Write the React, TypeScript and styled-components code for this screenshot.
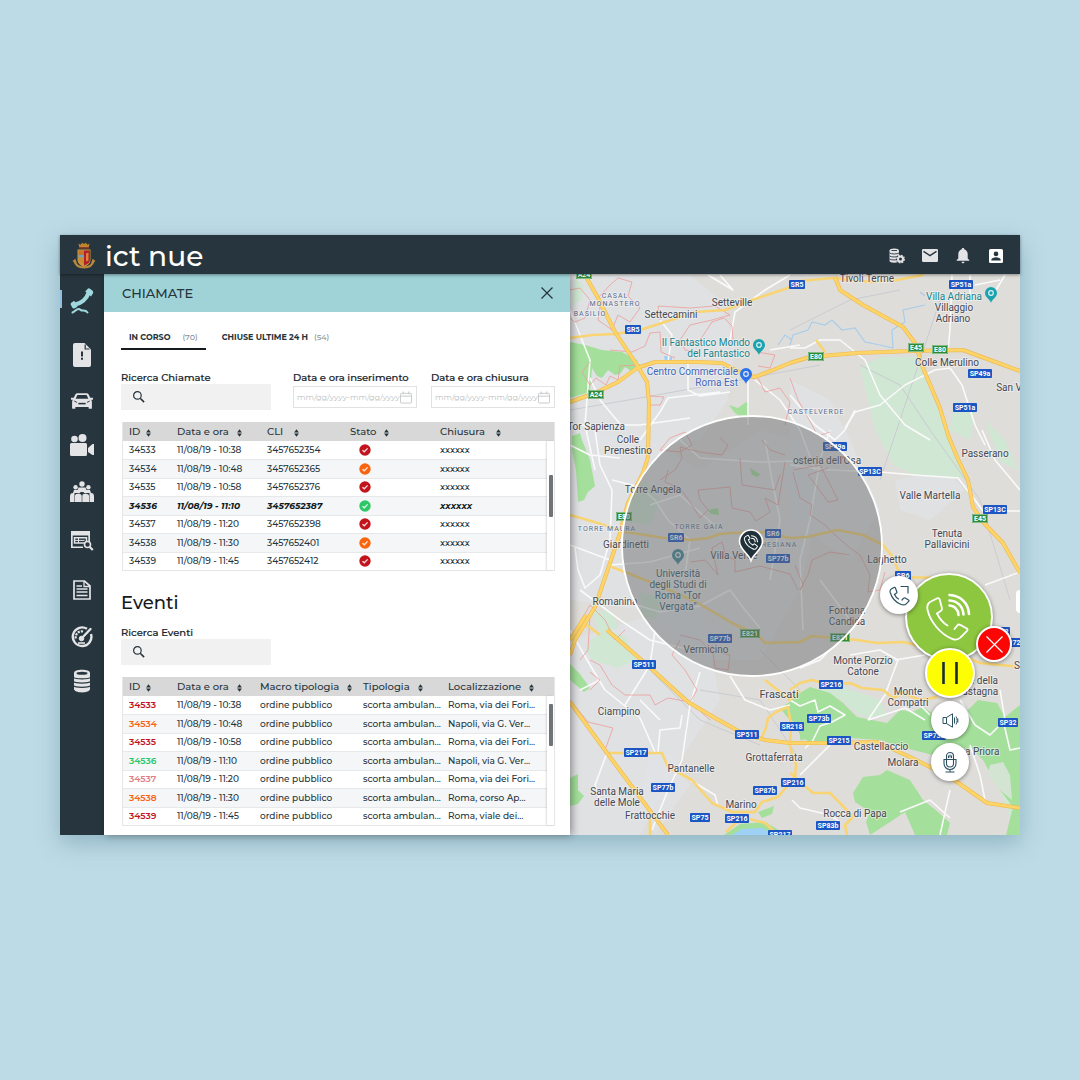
import React from "react";
import styled, { createGlobalStyle, css } from "styled-components";

const ink = "#26343b";
const pale = "#e4e3e6";
const sans = `Montserrat, Inter, "Open Sans", sans-serif`;

const GlobalStyle = createGlobalStyle`
  *, *::before, *::after { box-sizing: border-box; }
  body { margin: 0; background: #bddbe6; font-family: ${sans}; color: ${ink}; }
  button, input { font-family: inherit; color: inherit; }
  button { padding: 0; border: 0; background: none; cursor: pointer; }
`;

const Page = styled.main`
  min-height: 100vh;
  padding: 235px 60px 240px;
`;

const Window = styled.div`
  display: flex;
  flex-direction: column;
  background: #fff;
  box-shadow: 0 8px 22px rgba(60, 110, 130, 0.35);
`;

const TopBar = styled.header`
  display: flex;
  align-items: center;
  height: 39px;
  padding: 2px 8px 0 12px;
  background: #27363e;
  position: relative;
  z-index: 3;
  box-shadow: 0 1px 3px rgba(0, 0, 0, 0.4);
`;

const Brand = styled.h1`
  flex: 1;
  margin: 0 0 0 9px;
  font-size: 28px;
  line-height: 36px;
  font-weight: 500;
  color: #fff;
`;

const TopButton = styled.button`
  display: grid;
  place-items: center;
  width: 33px;
  height: 36px;
  color: ${pale};
`;

const Body = styled.div`
  display: flex;
`;

const SideNav = styled.nav`
  flex: 0 0 44px;
  display: flex;
  flex-direction: column;
  background: #27363e;
`;

const NavButton = styled.button<{ $h: number; $active?: boolean }>`
  display: grid;
  place-items: center;
  height: ${(p) => p.$h}px;
  color: ${(p) => (p.$active ? "#9fd8de" : pale)};
  position: relative;
  ${(p) =>
    p.$active &&
    css`
      &::before {
        content: "";
        position: absolute;
        left: 0;
        top: 16px;
        width: 2px;
        height: 18px;
        background: #8fc0e0;
      }
    `}
`;

const Panel = styled.section`
  flex: 0 0 466px;
  background: #fff;
  position: relative;
  z-index: 2;
  box-shadow: 2px 0 8px rgba(0, 0, 0, 0.4);
`;

const PanelHeader = styled.div`
  display: flex;
  align-items: center;
  justify-content: space-between;
  height: 38px;
  padding: 0 16px 0 18px;
  background: #9fd3d8;
`;

const PanelTitle = styled.h2`
  margin: 0;
  font-size: 13px;
  line-height: 20px;
  font-weight: 500;
`;

const CloseButton = styled.button`
  display: grid;
  place-items: center;
  width: 14px;
  height: 20px;
`;

const PanelBody = styled.div`
  padding: 16px 15px 9px 17px;
`;

const Tabs = styled.div`
  display: flex;
  gap: 8px;
`;

const Tab = styled.button<{ $active?: boolean; $gap: number }>`
  display: flex;
  align-items: center;
  gap: ${(p) => p.$gap}px;
  padding: 0 8px 2px;
  height: 22px;
  font-size: 8px;
  line-height: 16px;
  font-weight: 700;
  border-bottom: 2px solid ${(p) => (p.$active ? "#151b1e" : "transparent")};
`;

const TabCount = styled.span`
  font-weight: 500;
  color: #8b9093;
`;

const Filters = styled.div`
  display: flex;
  align-items: flex-end;
  justify-content: space-between;
  margin-top: 20px;
`;

const Field = styled.div<{ $w: number }>`
  display: flex;
  flex-direction: column;
  justify-content: flex-end;
  width: ${(p) => p.$w}px;
  height: 40px;
`;

const Label = styled.label`
  font-size: 10px;
  line-height: 12px;
  font-weight: 500;
  color: #17242a;
  -webkit-text-stroke: 0.2px #17242a;
  white-space: nowrap;
`;

const SearchBox = styled.div`
  display: flex;
  align-items: center;
  height: 26px;
  padding-left: 11px;
  background: #f1f1f1;
`;

const SearchInput = styled.input`
  flex: 1;
  min-width: 0;
  height: 26px;
  padding: 0 8px;
  border: 0;
  background: transparent;
  font-size: 10px;
`;

const DateBox = styled.div`
  display: flex;
  align-items: center;
  height: 22px;
  margin: 2px 0;
  padding: 0 4px 0 3px;
  border: 1px solid #e1e2e3;
  color: #bcbfc1;
`;

const DateInput = styled.input`
  flex: 1;
  min-width: 0;
  height: 18px;
  padding: 0;
  border: 0;
  background: transparent;
  font-size: 8px;
  font-weight: 400;
  &::placeholder {
    color: #bcbfc1;
    opacity: 1;
  }
`;

const TableFrame = styled.div`
  position: relative;
  margin-top: 12px;
  margin-left: 1px;
  border: 1px solid #e6e6e7;
  border-top: 0;
`;

const DataTable = styled.table`
  width: 100%;
  table-layout: fixed;
  border-collapse: collapse;
`;

const Th = styled.th<{ $w?: number }>`
  width: ${(p) => (p.$w ? `${p.$w}px` : "auto")};
  height: 19px;
  padding: 0 0 0 6px;
  text-align: left;
  background: #d8d8d8;
`;

const ThInner = styled.span<{ $gap: number }>`
  display: flex;
  align-items: center;
  gap: ${(p) => p.$gap}px;
  font-size: 10px;
  line-height: 18px;
  font-weight: 500;
  white-space: nowrap;
  svg {
    margin-top: 3px;
  }
`;

const Tr = styled.tr<{ $current?: boolean }>`
  height: 18px;
  &:nth-child(even) {
    height: 19px;
    background: #f4f6f8;
  }
  & + & {
    border-top: 1px solid #e6e8e9;
  }
  font-weight: ${(p) => (p.$current ? 700 : 500)};
  font-style: ${(p) => (p.$current ? "italic" : "normal")};
  color: ${(p) => (p.$current ? "#101b20" : ink)};
`;

const Td = styled.td<{ $color?: string }>`
  padding: 0 0 0 6px;
  font-size: 9px;
  line-height: 16px;
  color: ${(p) => p.$color || "inherit"};
  font-weight: ${(p) => (p.$color ? 600 : "inherit")};
  white-space: nowrap;
`;

const StatusDot = styled.span`
  display: block;
  height: 12px;
  padding-left: 9px;
  svg {
    display: block;
  }
`;

const ScrollTrack = styled.div`
  position: absolute;
  top: 19px;
  right: 0;
  bottom: 0;
  width: 7px;
  background: #fff;
  box-shadow: -1px 0 2px rgba(0, 0, 0, 0.14);
`;

const ScrollThumb = styled.div<{ $top: number }>`
  width: 4px;
  height: 42px;
  margin: ${(p) => p.$top}px 0 0 2px;
  border-radius: 1px;
  background: #717476;
`;

const SectionTitle = styled.h2`
  margin: 20px 0 10px;
  font-size: 18px;
  line-height: 24px;
  font-weight: 500;
  color: #15191b;
`;

const MapArea = styled.section`
  flex: 1;
  min-width: 0;
  position: relative;
  overflow: hidden;
  background: #dfddd9;
`;

const MapDrawing = styled.svg`
  position: absolute;
  inset: 0;
  width: 100%;
  height: 100%;
`;

const CallButton = styled.button<{ $right: number; $top: number; $size: number; $bg: string }>`
  position: absolute;
  right: ${(p) => p.$right}px;
  top: ${(p) => p.$top}px;
  width: ${(p) => p.$size}px;
  height: ${(p) => p.$size}px;
  display: grid;
  place-items: center;
  border-radius: 50%;
  border: 2px solid #fff;
  background: ${(p) => p.$bg};
  box-shadow: 0 1px 4px rgba(0, 0, 0, 0.45);
  color: #2c5262;
`;

/* ---------- icons ---------- */

const Crest = () => (
  <svg width="24" height="30" viewBox="0 0 24 30" aria-hidden="true">
    <path d="M6.500 2.500l2 1.200 1.700-2 1.800 1.300 1.800-1.300 1.700 2 2-1.200-.8 4H7.300z" fill="#c0842f" />
    <path d="M7 6h10v1.600H7z" fill="#8a3b2b" />
    <path d="M5.500 8.500h13v10c0 4-3 6-6.500 7.500-3.500-1.500-6.500-3.500-6.500-7.500z" fill="#c9963f" />
    <path d="M6.500 9.500H12v5H6.500z" fill="#c8742f" />
    <path d="M6.500 14H12v2.500H6.500z" fill="#6aa3c4" />
    <path d="M6.500 16.500H12v7c-3-1.200-5.500-2.800-5.500-5.500z" fill="#c98b35" />
    <path d="M12 9.500h6v9c0 3-2.500 4.800-6 6z" fill="#b3202a" />
    <path d="M14 12.500l2.500-1v8l-2.500 1z" fill="#d9833f" />
    <path d="M2.500 20c1 4 4 6.500 9.500 6.500s8.500-2.500 9.500-6.500" fill="none" stroke="#b9893c" strokeWidth="2.200" />
    <path d="M1 20.500l2-1.500 1 3M23 20.500L21 19l-1 3" fill="none" stroke="#b9893c" strokeWidth="1.500" />
  </svg>
);

const HandsetIcon = () => (
  <svg width="24" height="26" viewBox="0 0 24 26" aria-hidden="true">
    <path d="M5 16.500C11 15.500 16.500 11 18.500 5" fill="none" stroke="currentColor" strokeWidth="4.200" />
    <path d="M15.200 3.500l2.300-2.600c.8-.9 2-.7 2.800 0l2 1.700c1 .8 1.200 2 .6 3L21 8.500z" fill="currentColor" />
    <path d="M7.500 18.800L4.800 20.300c-1 .6-2 .3-2.600-.7L1 17.300c-.6-1-.4-2.200.6-2.900l2.700-1.600z" fill="currentColor" />
    <path d="M2.500 24.500C5 23.300 7 20.300 9 21s1.500 1.700 4 1.500 3.500.5 4.500 2" fill="none" stroke="currentColor" strokeWidth="2" strokeLinecap="round" />
  </svg>
);

const AlertDocIcon = () => (
  <svg width="18" height="24" viewBox="0 0 18 24" aria-hidden="true">
    <path d="M2 0h9.500L18 6.500V22a2 2 0 0 1-2 2H2a2 2 0 0 1-2-2V2a2 2 0 0 1 2-2z" fill="currentColor" />
    <path d="M12.200 1.500V6h4.300" fill="none" stroke="#27363e" strokeWidth="1.200" />
    <path d="M8 8.500h2v5H8zM8 14.800h2v2H8z" fill="#27363e" />
  </svg>
);

const CarIcon = () => (
  <svg width="22" height="16" viewBox="0 0 24 17" aria-hidden="true">
    <path d="M0 5h3l2-4.200C5.300.3 6 0 7 0h10c1 0 1.700.3 2 .8L21 5h3v2h-2c.6.8.8 1.500.8 2.500V16a1 1 0 0 1-1 1h-1.600a1 1 0 0 1-1-1v-1H4.800v1a1 1 0 0 1-1 1H2.200a1 1 0 0 1-1-1V9.500C1.200 8.500 1.500 7.800 2 7H0z" fill="currentColor" />
    <path d="M5 6l2-4h10l2 4z" fill="#27363e" />
    <path d="M8 10.500h8v1.700H8z" fill="#27363e" />
    <path d="M3.500 8.500l3 1.500M20.500 8.500l-3 1.500" stroke="#27363e" strokeWidth="1" />
  </svg>
);

const CameraIcon = () => (
  <svg width="24" height="23" viewBox="0 0 24 23" fill="currentColor" aria-hidden="true">
    <circle cx="4.500" cy="5" r="3.300" />
    <circle cx="12.500" cy="4" r="4" />
    <path d="M1.500 9h14A1.500 1.500 0 0 1 17 10.500v10a1.500 1.500 0 0 1-1.500 1.500h-14A1.500 1.500 0 0 1 0 20.500v-10A1.500 1.500 0 0 1 1.500 9zM18 14l4.500-4H24v11h-1.500L18 18z" />
  </svg>
);

const CrowdIcon = () => (
  <svg width="24" height="22" viewBox="0 0 24 22" fill="currentColor" aria-hidden="true">
    <circle cx="12" cy="3" r="2.700" />
    <circle cx="5.600" cy="6.300" r="2.200" />
    <circle cx="18.400" cy="6.300" r="2.200" />
    <path d="M8.500 6.500h7L17 11H7zM4 9h3l1 3H3zM17 9h3l1 3h-5z" />
    <circle cx="8.500" cy="10.500" r="2.100" />
    <circle cx="15.500" cy="10.500" r="2.100" />
    <path d="M0 21v-5.500C0 13 1 12 3 12h1.500v9zM5 21v-6c0-1.500 1-2 2-2h2.800c1 0 1.900.8 1.900 2v6zM12.300 21v-6c0-1.500 1-2 2-2H17c1 0 2 .8 2 2v6zM19.500 21v-9H21c2 0 3 1 3 3.500V21z" />
  </svg>
);

const FormSearchIcon = () => (
  <svg width="23" height="20" viewBox="0 0 23 20" aria-hidden="true">
    <path d="M0 0h19v13h-1.700V4.500H1.700v11H12V17H0z" fill="currentColor" />
    <path d="M3.500 6.800h12V12h-12z" fill="none" stroke="currentColor" strokeWidth="1.500" />
    <path d="M3.500 9.400h10M7.500 6.500V12" stroke="currentColor" />
    <circle cx="16.500" cy="13.500" r="3" fill="#27363e" stroke="currentColor" strokeWidth="1.600" />
    <path d="M18.800 16l3 3" stroke="currentColor" strokeWidth="2.200" />
  </svg>
);

const ListDocIcon = () => (
  <svg width="18" height="20" viewBox="0 0 18 20" fill="none" stroke="currentColor" aria-hidden="true">
    <path d="M1 1h10.500L17 6v13H1z" strokeWidth="1.700" />
    <path d="M11 1v5.500h6" strokeWidth="1.300" />
    <path d="M3.500 6H9M3.500 9h11M3.500 12h11M3.500 15.500h11" strokeWidth="1.700" />
  </svg>
);

const GaugeIcon = () => (
  <svg width="22" height="22" viewBox="0 0 22 22" fill="none" stroke="currentColor" aria-hidden="true">
    <path d="M16 2.800A9.300 9.300 0 1 0 20 8" strokeWidth="2.400" />
    <path d="M4.800 12.500a6 6 0 0 1 8-6.800" strokeWidth="2.200" strokeDasharray="2.200 1" />
    <path d="M10.500 12.500L19.500 3" strokeWidth="2.400" strokeLinecap="round" />
    <circle cx="10.500" cy="12.500" r="2.300" fill="currentColor" />
    <path d="M7 17h7" strokeWidth="1.600" />
  </svg>
);

const DatabaseIcon = () => (
  <svg width="18" height="24" viewBox="0 0 18 24" aria-hidden="true">
    <path d="M1 4c0-2 3.500-3.200 8-3.200S17 2 17 4v16c0 2-3.500 3.400-8 3.400S1 22 1 20z" fill="currentColor" />
    <ellipse cx="9" cy="4.200" rx="5.500" ry="1.500" fill="#27363e" />
    <path d="M0 8c2 2.600 16 2.600 18 0M0 12.200c2 2.600 16 2.600 18 0M0 16.400c2 2.600 16 2.600 18 0" fill="none" stroke="#27363e" strokeWidth="1.200" />
  </svg>
);

const DbGearIcon = () => (
  <svg width="16" height="16" viewBox="0 0 16 16" aria-hidden="true">
    <path d="M.5 2.500C.500 1.200 2.500.4 5.200.4S10 1.200 10 2.500v10c0 1.500-2 2.200-4.800 2.200S.5 14 .5 12.500z" fill="currentColor" />
    <path d="M2.500 2.500h5.500M.5 5c1.500 1.300 8 1.300 9.500 0M.5 8c1.500 1.300 8 1.300 9.500 0M.5 11c1.500 1.300 8 1.300 9.500 0" fill="none" stroke="#27363e" strokeWidth=".9" />
    <circle cx="11.500" cy="11" r="4.600" fill="#27363e" />
    <circle cx="11.500" cy="11" r="2.500" fill="none" stroke="currentColor" strokeWidth="2" />
    <circle cx="11.500" cy="11" r="3.800" fill="none" stroke="currentColor" strokeWidth="1.200" strokeDasharray="1.800 1.180" />
  </svg>
);

const MailIcon = () => (
  <svg width="16" height="13" viewBox="0 0 16 13" aria-hidden="true">
    <rect width="16" height="13" rx="1.300" fill="currentColor" />
    <path d="M1.500 2.300L8 6.600l6.500-4.300" fill="none" stroke="#27363e" strokeWidth="1.400" />
  </svg>
);

const BellIcon = () => (
  <svg width="14" height="16" viewBox="0 0 14 16" fill="currentColor" aria-hidden="true">
    <path d="M7 0c.8 0 1.200.5 1.200 1.300C10.600 2 11.700 4 11.700 6.300V10.500L13.300 12v.8H.7V12l1.600-1.500V6.300C2.300 4 3.400 2 5.800 1.300 5.800.5 6.200 0 7 0zM5.500 13.800h3C8.500 14.700 7.900 15.300 7 15.300s-1.500-.6-1.500-1.500z" />
  </svg>
);

const AccountIcon = () => (
  <svg width="14" height="14" viewBox="0 0 14 14" aria-hidden="true">
    <rect width="14" height="14" rx="1.500" fill="#fff" />
    <circle cx="7" cy="4.900" r="2.300" fill="#27363e" />
    <path d="M2.300 11.500v-.8C2.300 9.200 5 8.300 7 8.300s4.700.9 4.700 2.400v.8z" fill="#27363e" />
  </svg>
);

const SearchIcon = () => (
  <svg width="14" height="14" viewBox="0 0 14 14" fill="none" stroke={ink} aria-hidden="true">
    <circle cx="5.400" cy="5.400" r="3.800" strokeWidth="1.200" />
    <path d="M8.200 8.200l3.900 3.900" strokeWidth="1.600" />
  </svg>
);

const CalendarIcon = () => (
  <svg width="12" height="13" viewBox="0 0 13 14" fill="none" stroke="#c3c6c8" aria-hidden="true">
    <rect x=".5" y="2.500" width="12" height="10.500" rx="1" />
    <path d="M.5 5.500h12M3.500 .5v3M9.500 .5v3" />
  </svg>
);

const SortIcon = () => (
  <svg width="5" height="8" viewBox="0 0 5 8" fill={ink} aria-hidden="true">
    <path d="M2.500 .3L4.900 3.400H.1zM2.500 7.700L.1 4.600h4.800z" />
  </svg>
);

const CheckDot = ({ color }: { color: string }) => (
  <svg width="12" height="12" viewBox="0 0 12 12" aria-hidden="true">
    <circle cx="6" cy="6" r="5.700" fill={color} />
    <path d="M3.500 6.200l1.800 1.600 3.300-3.400" fill="none" stroke="#fff" strokeWidth="1.300" strokeOpacity=".85" />
  </svg>
);

const CloseIcon = ({ size, color }: { size: number; color: string }) => (
  <svg width={size} height={size} viewBox={`0 0 ${size} ${size}`} fill="none" stroke={color} aria-hidden="true">
    <path d={`M.5 .5L${size - 0.5} ${size - 0.5}M${size - 0.5} .5L.5 ${size - 0.5}`} strokeWidth="1.200" />
  </svg>
);

const handset =
  "M5 4L10 1c1-.6 2-.3 2.600.7l3.200 6c.5 1 .2 2-.7 2.600l-3 1.800c1.500 5 6 10.500 11 13l2.600-2.400c.8-.7 1.900-.7 2.700 0l5.600 4.600c.9.8 1 1.800.3 2.700L31 34c-2 2.200-5.400 2-8.200.6C13 30 4.500 20 2.200 11 1.600 8.200 2.600 5.500 5 4z";

const RingingIcon = () => (
  <svg width="46" height="48" viewBox="0 0 46 48" fill="none" stroke="#fff" strokeWidth="1.800" strokeLinecap="round" aria-hidden="true">
    <path d="M11 20.500l4-2.800c.9-.7 1.200-1.500.9-2.600L13.700 6.500c-.4-1.200-1.200-1.700-2.400-1.200L4 9C1.200 10.800 .9 14 1.600 17 4 28 14 41 26 45.800c3.500 1.400 6.500.8 8.500-1.300l6.500-6.500c.8-.9.700-1.900-.2-2.600l-6.600-3.500c-1-.6-2-.5-2.700.4L28.500 36" />
    <path d="M11 20.500c2.500 5 6 9.500 10.500 12" />
    <path d="M23.500 12.500c5 .5 8.500 4 9 9.500M23.500 7.500c8 .5 13.500 6 14 14M23.500 2c11 .5 19 8 19.500 19" strokeWidth="2.600" />
  </svg>
);

const OutgoingIcon = () => (
  <svg width="21" height="22" viewBox="0 0 21 22" fill="none" stroke="#2c5262" strokeWidth="1.200" strokeLinecap="round" aria-hidden="true">
    <path d="M5.500 10.500l2-1.500c.5-.4.5-.8.3-1.300L6.300 3.800c-.3-.6-.8-.7-1.300-.4L2.300 5C1 5.800.8 7 1.200 8.500c1.500 5 5.500 10 11 12 2 .7 3.800.6 5-.6l2.500-2.500c.5-.5.4-1-.2-1.400l-3.300-2c-.6-.3-1-.3-1.500.2L13 16" />
    <path d="M5.500 10.500c1 2 2.300 3.500 4 4.500" />
    <path d="M12 2.500h7v6.500" />
  </svg>
);

const PauseIcon = () => (
  <svg width="18" height="22" viewBox="0 0 18 22" stroke="#1c2c36" strokeWidth="2.600" aria-hidden="true">
    <path d="M2.500 0v22M15.500 0v22" />
  </svg>
);

const SpeakerIcon = () => (
  <svg width="17" height="15" viewBox="0 0 17 15" fill="none" stroke="#2c5262" aria-hidden="true">
    <path d="M1 4.500h3.500L10.500 .8v13.400l-6-3.700H1zM4.500 4.500v6" />
    <path d="M12.500 4.500v6M14 3.500c1.500 2.500 1.500 5.500 0 8M15.800 5.500v4" />
  </svg>
);

const MicIcon = () => (
  <svg width="14" height="22" viewBox="0 0 14 22" fill="none" stroke="#2c5262" strokeWidth="1.100" aria-hidden="true">
    <path d="M3.500 8V5a3.500 3.500 0 0 1 7 0v3M5.500 4.500v2.500M8.500 4.500v2.500M7 3.500v3" />
    <path d="M1 8.500h12v4a6 6 0 0 1-12 0zM3.500 9v3.500a3.500 3.500 0 0 0 7 0V9M7 18v3M2.500 21h9" />
  </svg>
);

/* ---------- map ---------- */

const greens = [
  "570,342 585,345 602,350 622,352 637,360 638,368 632,372 625,367 620,374 615,375 608,370 602,378 597,376 592,368 590,392 570,398",
  "572,436 580,433 582,440 590,460 595,486 588,492 584,500 578,502 576,470 572,450",
  "570,664 580,674 590,688 584,692 570,680",
  "729,405 738,408 746,402 749,404 748,416 742,418 734,412",
  "570,778 578,774 578,790 584,796 578,804 570,806",
  "750,468 760,474 758,477 752,475",
  "708,510 718,508 719,515 711,514",
  "724,835 740,824 765,822 782,832 782,835",
  "758,812 774,806 772,814 762,818",
  "780,708 790,702 800,706 800,726 788,718",
  "790,699 810,687 830,693 843,703 857,717 887,723 900,710 912,712 923,707 935,715 960,718 978,700 997,703 1005,717 1020,705 1020,835 1006,835 1013,807 1000,790 983,760 970,747 950,760 925,753 905,748 880,740 850,738 812,744 800,735 792,716",
  "853,793 863,777 880,775 887,770 910,780 923,800 938,812 950,823 947,835 915,835 905,812 890,822 870,835 866,822 870,812 855,802",
  "800,725 812,722 830,730 818,738 800,740",
];
const paleGreens = [
  "860,368 880,357 917,357 925,380 940,415 948,440 965,478 950,478 915,475 893,465 875,430 868,400",
  "575,279 584,285 582,300 572,305",
  "590,640 605,630 625,636 636,660 618,668 592,660 586,650",
  "630,500 645,480 660,500 650,525 630,522",
  "640,592 662,598 656,620 642,615",
  "592,610 612,612 618,628 600,634",
  "820,690 840,686 880,700 888,718 860,716 842,700",
  "990,770 1005,766 1012,780 1014,830 1000,790",
  "985,420 1005,440 1018,470 1000,462",
  "955,400 975,410 970,440 950,430",
];
const urban = [
  "570,275 690,275 720,300 735,345 728,400 700,440 640,450 570,440",
  "570,430 650,440 700,470 760,430 800,440 820,500 800,590 760,660 700,660 640,610 570,600",
  "570,640 700,600 720,700 680,760 640,835 570,835",
  "650,750 672,754 690,785 655,835 640,800",
  "790,380 830,400 850,440 880,510 850,560 790,520",
  "895,480 945,470 965,490 930,520 900,510",
];
const lakes = ["732,835 742,829 762,828 774,835", "664,356 672,357 672,361 665,361"];

const whiteRoads = [
  "M570 310L580 335 590 360 587 400 585 425 595 470M570 425H640L690 418M640 440L660 412 668 398 720 392M688 362V390L700 396 730 392",
  "M720 275L733 290 708 275M790 275L765 290 735 312 730 340M660 320L672 335 668 362M748 375V425M570 445L590 455 620 458",
  "M595 430L600 465 612 490 610 540 600 575 585 588 578 570 575 548M570 545L610 560M612 480L640 487 655 500M655 500L668 520 690 540 685 575",
  "M650 505L680 495 720 530M680 440L700 458 760 462 840 460M765 440L772 480 780 520 770 580",
  "M610 565L650 562 700 548M620 600L660 612 700 606 730 590 745 610 760 628M580 590L620 620 650 640 690 650",
  "M655 630L650 665 625 705M570 630L590 665 605 690 640 718 655 752M600 680L580 690M607 753L595 785 600 800M690 705L682 760 668 790 652 830M658 752L660 730 680 728 682 715",
  "M700 672L690 705M730 676L745 700 770 710 790 705M690 780L715 795 718 806M640 700L660 720",
  "M790 348L805 348 820 340 840 340 865 360 880 395 905 425 930 440M845 428L855 412 880 405 905 385 935 370 950 368 962 385 975 425 985 445",
  "M790 465L830 470 880 472 915 475 958 478 975 500 983 511 1020 511M952 275L950 330 948 350M975 285L1000 280M990 300L1005 275",
  "M970 275V300M982 430L995 460 1020 490M1020 572L985 585M790 395L815 425 835 440 845 430 855 410",
  "M803 630L800 560 810 520 820 460 830 430M840 640L820 660 800 668M820 580L850 620M850 655L880 650 898 660 885 695 868 720M895 660L925 655",
  "M868 720L905 708 925 720M790 700L800 706 815 700 818 712 830 706 845 715 832 722 820 726 812 742 805 748M800 775L830 745M792 800L800 808 830 815 840 822M900 812L930 800 950 818M915 700L930 715M960 700L975 725 990 735 1005 720 1000 690M970 745L980 775 985 800M1003 720L1010 750 1020 748M950 790L940 835",
  "M590 378L600 400 625 430M755 380L780 400 800 430 815 470M770 350L800 345",
];
const thinRoads = [
  "M570 410L640 398 740 380 820 365M790 330L850 300 900 290M940 300L900 420 880 480M860 365L900 385 930 430 980 500 1010 600",
  "M700 690L760 700 800 760M620 640L700 720 760 745M760 650L800 690",
];
const redLines = [
  "M598 298L610 285 618 278 632 282 628 296 640 308 630 322 618 315 612 330 598 320 600 308zM570 290L580 288 590 300 585 318 575 322 570 318",
  "M640 365L620 366 618 380 610 376 606 385 596 378 590 385 582 372 590 362",
  "M610 350L632 352 645 346 650 333 660 332 661 352 675 358M660 320L658 306 690 308 715 306 730 315 712 320 690 325 680 340 685 350 700 352",
  "M700 340L712 322 724 318 732 326 733 340 728 345M650 396L664 397 660 405 650 405M757 352L775 355 770 368 758 366M758 378L765 392 780 388 790 402 785 425",
  "M660 450L670 438 685 432 692 445 680 452zM660 480L675 470 682 458 680 447 700 452 722 455 728 445 720 438",
  "M668 470L665 482 680 488 692 505 700 518 708 510 700 500 698 490 730 487 732 508 750 512 756 521 770 512 765 498 778 505 785 462M740 458L742 485 775 490 780 475M762 440L770 450 785 455",
  "M690 562L705 560 718 575 712 548 722 542 726 556 735 560 735 572 760 566 790 574 798 590",
  "M793 470L820 465 838 500 828 502 818 488 808 475 828 468M793 472L800 498 812 505 810 515 825 525 835 535 850 548 860 555 870 575 868 592 880 590 885 572M795 565L803 585 800 590 808 575 812 560 830 552 850 555",
  "M570 640L590 605 605 620 615 640 625 630M590 660L600 665 612 685 625 695 650 695 655 705 668 698 690 702 697 690 685 670 672 655 680 640M690 702L710 720",
  "M570 700L588 722 613 728 605 750 608 756M590 690L600 680 590 672M590 615L588 650 580 660M680 635L700 640 710 650 730 655 728 670 715 668 712 645",
  "M790 378L798 400 812 425 818 436 830 432",
];
const streams =
  "M790 345L793 335 808 330 812 322 825 325 832 320 842 330 855 328 865 342 880 345 893 348 892 330 905 322 903 310 925 305M778 345L785 335 792 340M920 292L925 296";

const yellowRoads = [
  "M570 338L592 335 615 334 640 330 665 322 695 312 725 310 752 300 788 288 800 281 833 278 870 282 897 280 923 275",
  "M570 515L598 523 625 532 665 538 690 540 708 538 720 534 732 533 765 532 790 538 807 537 837 530 863 535 883 545 893 557 898 570 905 577 937 578",
  "M612 567L658 585 698 603 732 623 758 635 765 643 800 642 812 636 857 640 877 643 903 642 960 655 980 663 1020 667",
  "M607 753H662L668 767 692 780 712 803 732 812 755 812 762 802 778 797 795 777 796 765 790 747 791 725 788 707 776 712 768 718 766 728 762 737M726 832L742 817 765 823 778 835",
  "M790 690L800 683 812 680 830 685 850 683 862 688 883 690 893 698 903 693 920 700 937 697M790 773L813 793 830 793 840 803 853 817 845 825 847 835",
  "M650 810V835M580 620L600 635M765 680L790 700 800 690",
  "M816 340L825 352",
];
const mainRoads = [
  "M585 275L598 298 615 332 637 365 647 382 649 402 648 457 643 473 628 503 620 533 610 563 595 607 575 640 570 655",
  "M570 402L595 393 618 382 637 368 655 362 698 362 722 363 745 375 755 377 778 368 790 363 810 357 857 353 910 351 963 350 990 360 1020 371",
  "M835 277L840 290 863 305 903 327 915 343 923 368 940 408 948 435 957 457 968 480 973 507 983 522 1003 543 1020 573",
  "M607 630L645 663 688 702 715 718 742 733 765 740 790 743 837 743 877 742 910 757 950 777 987 803 1020 808",
  "M570 702L607 753 642 800 668 835M586 615L570 640",
];

type Place = [string, number, number, string?];
const places: Place[] = [
  ["Setteville", 732, 306], ["Settecamini", 671, 318], ["Tivoli Terme", 867, 282],
  ["Villaggio", 954, 311], ["Adriano", 953, 322], ["Colle Merulino", 947, 366],
  ["Tor Sapienza", 596, 430], ["Colle", 628, 443], ["Prenestino", 628, 454],
  ["Torre Angela", 653, 493], ["Giardinetti", 626, 548], ["Romanina", 615, 605],
  ["Villa Verde", 734, 559], ["Passerano", 985, 457], ["Valle Martella", 930, 499],
  ["Tenuta", 947, 537], ["Pallavicini", 947, 548], ["Laghetto", 887, 563],
  ["Fontana", 847, 614], ["Candida", 847, 625], ["osteria dell'Osa", 827, 464],
  ["Monte Porzio", 863, 664], ["Catone", 863, 675], ["Vermicino", 706, 653],
  ["Ciampino", 619, 715], ["Pantanelle", 691, 772], ["Grottaferrata", 774, 761],
  ["Santa Maria", 617, 795], ["delle Mole", 617, 806], ["Frattocchie", 650, 819],
  ["Marino", 741, 808], ["Monte", 908, 695], ["Compatri", 908, 706],
  ["Castellaccio", 881, 750], ["Molara", 903, 766], ["Rocca di Papa", 855, 817],
  ["Rocca Priora", 971, 755], ["Colle della", 975, 684], ["Castagna", 977, 695],
];
const areas: Place[] = [
  ["CASAL", 615, 298], ["MONASTERO", 615, 306], ["BASILIO", 590, 316],
  ["CASTELVERDE", 816, 414], ["TORRE MAURA", 607, 531], ["TORRE GAIA", 699, 529], ["BORGHESIANA", 768, 547],
];
const shields: Place[] = [
  ["SR5", 633, 330], ["SR5", 797, 285], ["SP51a", 961, 285], ["SP49a", 980, 374],
  ["SP51a", 965, 408], ["SP49a", 835, 447], ["SP13C", 870, 472], ["SP13C", 995, 510],
  ["SR6", 676, 538], ["SR6", 773, 534], ["SP77b", 778, 559], ["SR6", 903, 576],
  ["SP77b", 720, 639], ["SP511", 644, 665], ["SP511", 747, 735], ["SP217", 636, 753],
  ["SP77b", 663, 788], ["SP75", 700, 818], ["SP216", 737, 819], ["SP87b", 765, 791],
  ["SP216", 793, 783], ["SR218", 792, 727], ["SP73b", 819, 719], ["SP215", 839, 741],
  ["SP216", 831, 685], ["SP83b", 828, 826], ["SP217", 780, 835], ["SP32", 1008, 723],
  ["SP73b", 934, 736], ["SP72", 1012, 643], ["SP72", 1000, 632],
  ["E80", 816, 357, "g"], ["E45", 916, 348, "g"], ["E80", 940, 350, "g"], ["A24", 596, 395, "g"],
  ["E80", 624, 517, "g"], ["E45", 980, 519, "g"], ["E821", 750, 634, "g"], ["E821", 840, 638, "g"],
  ["A24", 584, 275, "g"],
];

const PlaceText = styled.text`
  font-family: Roboto, sans-serif;
  font-size: 10px;
  fill: #454955;
  stroke: #f4f3f1;
  stroke-width: 2px;
  stroke-opacity: 0.6;
  paint-order: stroke;
  text-anchor: middle;
`;
const TownText = styled(PlaceText)`
  font-size: 11px;
`;
const AreaText = styled(PlaceText)`
  font-size: 7px;
  letter-spacing: 1px;
  fill: #586c94;
`;
const PoiText = styled(PlaceText)<{ $color: string; $center?: boolean }>`
  fill: ${(p) => p.$color};
  text-anchor: ${(p) => (p.$center ? "middle" : "end")};
`;
const ShieldText = styled.text`
  font-family: Roboto, sans-serif;
  font-size: 7px;
  font-weight: 700;
  fill: #fff;
  text-anchor: middle;
`;

const PoiPin = ({ x, y, color }: { x: number; y: number; color: string }) => (
  <g>
    <path d={`M${x} ${y + 9}c-1-4-6-5.500-6-10a6 6 0 0 1 12 0c0 4.500-5 6-6 10z`} fill={color} />
    <circle cx={x} cy={y - 1} r="2.300" fill="none" stroke="#fff" strokeWidth="1.200" strokeOpacity=".85" />
  </g>
);

const CityMap = () => (
  <MapDrawing viewBox="570 274 450 561" preserveAspectRatio="xMinYMin slice" role="img" aria-label="Mappa">
    <rect x="570" y="274" width="450" height="561" fill="#dfddd9" />
    {urban.map((p) => <polygon key={p} points={p} fill="#e0e2e6" opacity=".75" />)}
    {paleGreens.map((p) => <polygon key={p} points={p} fill="#d0e7d3" />)}
    {greens.map((p) => <polygon key={p} points={p} fill="#a4e09b" />)}
    <polygon points="990,765 1003,762 1010,775 1012,800 1000,790 988,775" fill="#d3e5d2" />
    {lakes.map((p) => <polygon key={p} points={p} fill="#9fd0f5" />)}
    <path d={streams} fill="none" stroke="#a8cdea" strokeWidth="1.200" />
    {thinRoads.map((d) => <path key={d} d={d} fill="none" stroke="#c9ccd1" strokeWidth="1" />)}
    <g fill="none" stroke="#fafafa" strokeWidth="1.600" strokeLinejoin="round">
      {whiteRoads.map((d) => <path key={d} d={d} />)}
    </g>
    <g fill="none" stroke="#ee9a98" strokeWidth=".9" strokeOpacity=".85">
      {redLines.map((d) => <path key={d} d={d} />)}
    </g>
    <g fill="none" strokeLinejoin="round">
      {yellowRoads.map((d) => <path key={d} d={d} stroke="#f9d472" strokeWidth="2.600" />)}
      {mainRoads.map((d) => <path key={d} d={d} stroke="#efb850" strokeWidth="4" />)}
      {mainRoads.map((d) => <path key={d + "f"} d={d} stroke="#fcd468" strokeWidth="2.800" />)}
    </g>
    {areas.map(([t, x, y]) => <AreaText key={t} x={x} y={y}>{t}</AreaText>)}
    {places.map(([t, x, y]) => <PlaceText key={t + y} x={x} y={y}>{t}</PlaceText>)}
    <PlaceText x="1009" y="391">San V</PlaceText>
    <PlaceText x="1017" y="669">S</PlaceText>
    <TownText x="779" y="698">Frascati</TownText>
    <PoiText $color="#16858f" x="750" y="346">Il Fantastico Mondo</PoiText>
    <PoiText $color="#16858f" x="750" y="357">del Fantastico</PoiText>
    <PoiText $color="#3f68bd" x="738" y="375">Centro Commerciale</PoiText>
    <PoiText $color="#3f68bd" x="738" y="386">Roma Est</PoiText>
    <PoiText $color="#16858f" x="982" y="300">Villa Adriana</PoiText>
    {["Università", "degli Studi di", "Roma \"Tor", "Vergata\""].map((t, i) => (
      <PoiText key={t} $color="#33586e" $center x="678" y={577 + i * 11}>{t}</PoiText>
    ))}
    <PoiPin x={759} y={346} color="#1aa3ae" />
    <PoiPin x={746} y={375} color="#2d72e8" />
    <PoiPin x={991} y={294} color="#1aa3ae" />
    <PoiPin x={678} y={556} color="#3d8496" />
    {shields.map(([t, x, y, kind]) => {
      const w = t.length * 4 + 4;
      return (
        <g key={t + x}>
          <rect x={x - w / 2} y={y - 5} width={w} height="9" rx="1" fill={kind ? "#2f8a35" : "#1c55c4"} />
          {kind && <rect x={x - w / 2 + 0.5} y={y - 4.5} width={w - 1} height="8" rx="1" fill="none" stroke="#dff0d8" strokeWidth=".5" />}
          <ShieldText x={x} y={y + 2}>{t}</ShieldText>
        </g>
      );
    })}
    <rect x="1016" y="590" width="24" height="23" rx="4" fill="#fff" />
    <circle cx="752" cy="546" r="130" fill="#686d6f" fillOpacity=".48" stroke="#fff" strokeWidth="1.800" />
    <path d="M751 560.500c-2.500-7-11.500-11-11.500-19a11.500 11.500 0 0 1 23 0c0 8-9 12-11.500 19z" fill="#20313a" stroke="#fff" strokeWidth="1.600" />
    <g transform="translate(743.500 535) scale(.4)" fill="none" stroke="#fff" strokeWidth="2.600">
      <path d={handset} />
      <path d="M20 2c8 0 15 6 15 15M20 8c5 0 9 4 9 9" strokeLinecap="round" />
    </g>
  </MapDrawing>
);

/* ---------- data ---------- */

const RED = "#c2141c";
const ORANGE = "#f9650f";
const GREEN = "#2cc866";

const calls = [
  ["34533", "11/08/19 - 10:38", "3457652354", RED],
  ["34534", "11/08/19 - 10:48", "3457652365", ORANGE],
  ["34535", "11/08/19 - 10:58", "3457652376", RED],
  ["34536", "11/08/19 - 11:10", "3457652387", GREEN],
  ["34537", "11/08/19 - 11:20", "3457652398", RED],
  ["34538", "11/08/19 - 11:30", "3457652401", ORANGE],
  ["34539", "11/08/19 - 11:45", "3457652412", RED],
];

const events = [
  ["34533", "11/08/19 - 10:38", "Roma, via dei Fori...", RED],
  ["34534", "11/08/19 - 10:48", "Napoli, via G. Ver...", ORANGE],
  ["34535", "11/08/19 - 10:58", "Roma, via dei Fori...", RED],
  ["34536", "11/08/19 - 11:10", "Napoli, via G. Ver...", GREEN],
  ["34537", "11/08/19 - 11:20", "Roma, via dei Fori...", "#e08084"],
  ["34538", "11/08/19 - 11:30", "Roma, corso Ap...", ORANGE],
  ["34539", "11/08/19 - 11:45", "Roma, viale dei...", RED],
];

type Col = [string, number | undefined, number];
const callCols: Col[] = [["ID", 48, 6], ["Data e ora", 90, 8], ["CLI", 83, 11], ["Stato", 90, 8], ["Chiusura", undefined, 11]];
const eventCols: Col[] = [["ID", 48, 6], ["Data e ora", 83, 8], ["Macro tipologia", 103, 8], ["Tipologia", 85, 8], ["Localizzazione", undefined, 8]];

const HeadRow = ({ cols }: { cols: Col[] }) => (
  <thead>
    <tr>
      {cols.map(([name, w, gap]) => (
        <Th key={name} $w={w} scope="col">
          <ThInner $gap={gap}>
            {name}
            <SortIcon />
          </ThInner>
        </Th>
      ))}
    </tr>
  </thead>
);

const SearchField = ({ id, label }: { id: string; label: string }) => (
  <Field $w={150}>
    <Label htmlFor={id}>{label}</Label>
    <SearchBox>
      <SearchIcon />
      <SearchInput id={id} type="text" />
    </SearchBox>
  </Field>
);

const DateField = ({ id, label }: { id: string; label: string }) => (
  <Field $w={124}>
    <Label htmlFor={id}>{label}</Label>
    <DateBox>
      <DateInput id={id} type="text" placeholder="mm/gg/yyyy-mm/gg/yyyy" />
      <CalendarIcon />
    </DateBox>
  </Field>
);

const DateGroup = styled.div`
  display: flex;
  gap: 14px;
`;

const navItems: [string, number, React.FC][] = [
  ["Chiamate", 54, HandsetIcon],
  ["Segnalazioni", 54, AlertDocIcon],
  ["Veicoli", 38, CarIcon],
  ["Telecamere", 50, CameraIcon],
  ["Persone", 44, CrowdIcon],
  ["Ricerca", 54, FormSearchIcon],
  ["Documenti", 44, ListDocIcon],
  ["Cruscotto", 50, GaugeIcon],
  ["Archivio", 38, DatabaseIcon],
];

export default function App() {
  return (
    <Page>
      <GlobalStyle />
      <Window>
        <TopBar>
          <Crest />
          <Brand>ict nue</Brand>
          <TopButton aria-label="Dati"><DbGearIcon /></TopButton>
          <TopButton aria-label="Messaggi"><MailIcon /></TopButton>
          <TopButton aria-label="Notifiche"><BellIcon /></TopButton>
          <TopButton aria-label="Profilo"><AccountIcon /></TopButton>
        </TopBar>
        <Body>
          <SideNav>
            {navItems.map(([name, h, Icon], i) => (
              <NavButton key={name} $h={h} $active={i === 0} aria-label={name}>
                <Icon />
              </NavButton>
            ))}
          </SideNav>
          <Panel>
            <PanelHeader>
              <PanelTitle>CHIAMATE</PanelTitle>
              <CloseButton aria-label="Chiudi"><CloseIcon size={12} color={ink} /></CloseButton>
            </PanelHeader>
            <PanelBody>
              <Tabs role="tablist">
                <Tab role="tab" aria-selected="true" $active $gap={12}>IN CORSO <TabCount>(70)</TabCount></Tab>
                <Tab role="tab" aria-selected="false" $gap={6}>CHIUSE ULTIME 24 H <TabCount>(54)</TabCount></Tab>
              </Tabs>
              <Filters>
                <SearchField id="call-search" label="Ricerca Chiamate" />
                <DateGroup>
                  <DateField id="date-in" label="Data e ora inserimento" />
                  <DateField id="date-out" label="Data e ora chiusura" />
                </DateGroup>
              </Filters>
              <TableFrame>
                <DataTable>
                  <HeadRow cols={callCols} />
                  <tbody>
                    {calls.map(([id, when, cli, color]) => (
                      <Tr key={id} $current={id === "34536"}>
                        <Td>{id}</Td>
                        <Td>{when}</Td>
                        <Td>{cli}</Td>
                        <Td><StatusDot><CheckDot color={color} /></StatusDot></Td>
                        <Td>xxxxxx</Td>
                      </Tr>
                    ))}
                  </tbody>
                </DataTable>
                <ScrollTrack><ScrollThumb $top={34} /></ScrollTrack>
              </TableFrame>
              <SectionTitle>Eventi</SectionTitle>
              <SearchField id="event-search" label="Ricerca Eventi" />
              <TableFrame>
                <DataTable>
                  <HeadRow cols={eventCols} />
                  <tbody>
                    {events.map(([id, when, where, color]) => (
                      <Tr key={id}>
                        <Td $color={color}>{id}</Td>
                        <Td>{when}</Td>
                        <Td>ordine pubblico</Td>
                        <Td>scorta ambulan...</Td>
                        <Td>{where}</Td>
                      </Tr>
                    ))}
                  </tbody>
                </DataTable>
                <ScrollTrack><ScrollThumb $top={8} /></ScrollTrack>
              </TableFrame>
            </PanelBody>
          </Panel>
          <MapArea>
            <CityMap />
            <CallButton $right={27} $top={299} $size={88} $bg="#8dc63f" aria-label="Chiamata in corso"><RingingIcon /></CallButton>
            <CallButton $right={102} $top={302} $size={38} $bg="#fff" aria-label="Trasferisci"><OutgoingIcon /></CallButton>
            <CallButton $right={8} $top={352} $size={36} $bg="#fb0505" aria-label="Termina"><CloseIcon size={17} color="#fff" /></CallButton>
            <CallButton $right={45} $top={374} $size={50} $bg="#fdfd03" aria-label="Pausa"><PauseIcon /></CallButton>
            <CallButton $right={51} $top={427} $size={38} $bg="#fff" aria-label="Altoparlante"><SpeakerIcon /></CallButton>
            <CallButton $right={51} $top={469} $size={38} $bg="#fff" aria-label="Microfono"><MicIcon /></CallButton>
          </MapArea>
        </Body>
      </Window>
    </Page>
  );
}
